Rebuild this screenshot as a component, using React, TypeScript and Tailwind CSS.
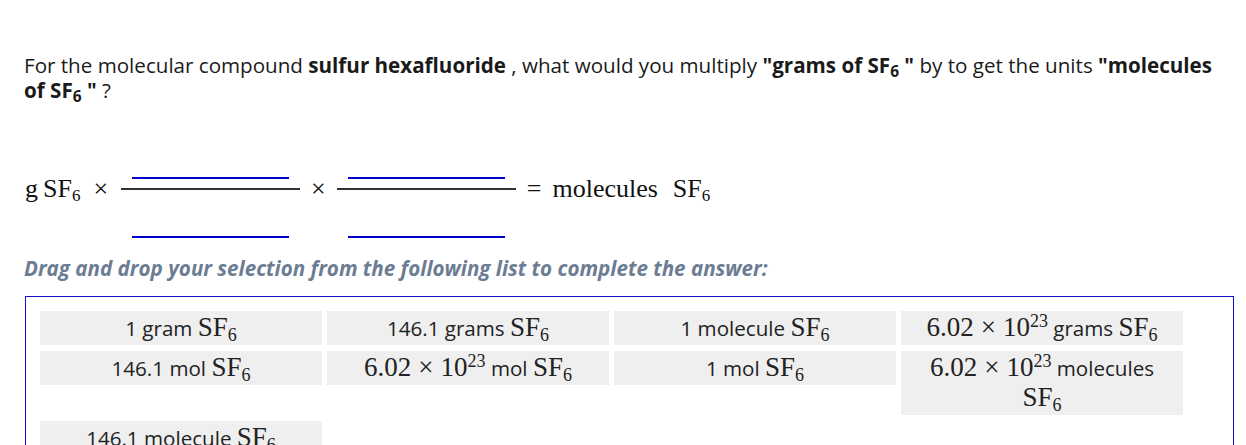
const sans = "font-['Open_Sans','Liberation_Sans',sans-serif]";
const serif = "font-['Liberation_Serif','DejaVu_Serif',serif]";

function SF6() {
  return (
    <span className={`${serif} text-[27px]`}>
      SF<sub className="text-[18px]">6</sub>
    </span>
  );
}

function Avogadro() {
  return (
    <span className={`${serif} text-[27px]`}>
      6.02<span className="mx-[7px]">×</span>10<sup className="text-[18px]">23</sup>
    </span>
  );
}

function Fraction() {
  return (
    <div className="flex flex-col w-[179px] shrink-0">
      <div className="h-[11px] mx-[11px] border-b-2 border-[#0000c8]" />
      <div className="h-[2px] mt-[9px] bg-[#333]" />
      <div className="h-[48px] mx-[11px] border-b-2 border-[#0000c8]" />
    </div>
  );
}

function Tile({ children }: { children: React.ReactNode }) {
  return (
    <div className="w-[282px] bg-[#efefef] py-[2px] px-2 text-center text-[20.6px] leading-[29px] text-[#222]">
      {children}
    </div>
  );
}

export default function App() {
  return (
    <div className={`min-h-screen bg-white pl-6 pr-3 pt-[53px] ${sans} text-[#1a1a1a]`}>
      {/* Question */}
      <p className="text-[20.6px] leading-[25px]">
        For the molecular compound <b>sulfur hexafluoride</b> , what would you multiply{" "}
        <b>
          "grams of SF<sub>6</sub> "
        </b>{" "}
        by to get the units{" "}
        <b>
          "molecules of SF<sub>6</sub> "
        </b>{" "}
        ?
      </p>

      {/* Equation */}
      <div className={`flex items-start mt-[65px] ${serif} text-[26px] leading-[26px] text-[#111]`}>
        <span className="mt-[8px] ml-[1px]">g</span>
        <span className="mt-[8px] ml-[5px]">
          SF<sub className="text-[17px]">6</sub>
        </span>
        <span className="mt-[8px] ml-[13px] mr-[13px]">×</span>
        <Fraction />
        <span className="mt-[8px] mx-[11px]">×</span>
        <Fraction />
        <span className="mt-[8px] ml-[11px]">=</span>
        <span className="mt-[8px] ml-[11px]">molecules</span>
        <span className="mt-[8px] ml-[15px]">
          SF<sub className="text-[17px]">6</sub>
        </span>
      </div>

      {/* Instruction */}
      <p className="mt-[18px] text-[20.6px] leading-[25px] font-bold italic text-[#6b7c93]">
        Drag and drop your selection from the following list to complete the answer:
      </p>

      {/* Choices */}
      <div className="mt-[15px] ml-[1px] border border-[#1010c8] pl-[14px] pr-3 pt-[14px] pb-6">
        <div className="flex flex-wrap items-start gap-x-[5px] gap-y-[6px]">
          <Tile>
            1 gram <SF6 />
          </Tile>
          <Tile>
            146.1 grams <SF6 />
          </Tile>
          <Tile>
            1 molecule <SF6 />
          </Tile>
          <Tile>
            <Avogadro /> grams <SF6 />
          </Tile>
          <Tile>
            146.1 mol <SF6 />
          </Tile>
          <Tile>
            <Avogadro /> mol <SF6 />
          </Tile>
          <Tile>
            1 mol <SF6 />
          </Tile>
          <Tile>
            <Avogadro /> molecules
            <br />
            <SF6 />
          </Tile>
          <Tile>
            146.1 molecule <SF6 />
          </Tile>
        </div>
      </div>
    </div>
  );
}
